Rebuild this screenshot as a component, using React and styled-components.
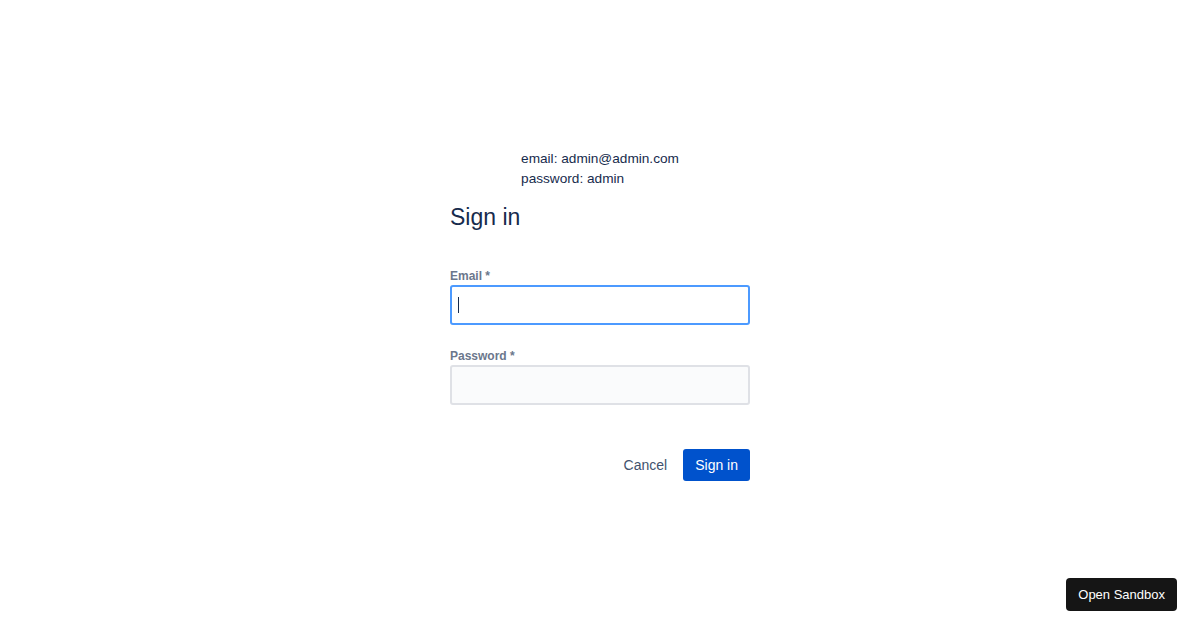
import React from 'react';
import styled, { createGlobalStyle } from 'styled-components';

const GlobalStyle = createGlobalStyle`
    html, body {
        margin: 0;
        padding: 0;
        background: #ffffff;
        font-family: "Liberation Sans", Arial, sans-serif;
        color: #172B4D;
    }
`;

const Page = styled.div`
    min-height: 630px;
    display: flex;
    flex-direction: column;
    align-items: center;
    padding-top: 149px;
    box-sizing: border-box;
`;

const Hint = styled.div`
    font-size: 13.65px;
    line-height: 20px;
    color: #172B4D;
    text-align: left;
`;

const Form = styled.form`
    width: 300px;
    display: flex;
    flex-direction: column;
`;

const Heading = styled.h1`
    margin: 14px 0 0;
    font-size: 23px;
    line-height: 28px;
    font-weight: 400;
    color: #172B4D;
`;

const Field = styled.div`
    display: flex;
    flex-direction: column;
    margin-top: ${(p) => p.$top}px;
`;

const Label = styled.label`
    font-size: 12px;
    line-height: 16px;
    font-weight: 700;
    color: #6B778C;
    margin-bottom: 1px;
`;

const InputBox = styled.div`
    height: 40px;
    box-sizing: border-box;
    border: 2px solid ${(p) => (p.$focused ? '#4C9AFF' : '#DFE1E6')};
    background: ${(p) => (p.$focused ? '#FFFFFF' : '#FAFBFC')};
    border-radius: 3px;
    display: flex;
    align-items: center;
    padding: 0 6px;
`;

const Caret = styled.span`
    width: 1px;
    height: 16px;
    background: #172B4D;
`;

const Input = styled.input`
    flex: 1;
    border: none;
    outline: none;
    background: transparent;
    font-family: inherit;
    font-size: 14px;
    color: #172B4D;
    padding: 0;
    min-width: 0;
`;

const Actions = styled.div`
    display: flex;
    justify-content: flex-end;
    gap: 4px;
    margin-top: 44px;
`;

const Button = styled.button`
    height: 32px;
    padding: 0 12px;
    border: none;
    border-radius: 3px;
    font-family: inherit;
    font-size: 14px;
    cursor: pointer;
    background: ${(p) => (p.$primary ? '#0052CC' : 'transparent')};
    color: ${(p) => (p.$primary ? '#FFFFFF' : '#42526E')};
`;

const SandboxButton = styled.button`
    position: fixed;
    right: 23px;
    bottom: 19px;
    height: 33px;
    padding: 0 12px;
    border: none;
    border-radius: 4px;
    background: #151515;
    color: #ffffff;
    font-family: "Liberation Sans", Arial, sans-serif;
    font-size: 13px;
`;

const TextField = ({ label, type, focused, top }) => (
    <Field $top={top}>
        <Label>{label} *</Label>
        <InputBox $focused={focused}>
            {focused && <Caret />}
            <Input type={type} />
        </InputBox>
    </Field>
);

export default function App() {
    return (
        <Page>
            <GlobalStyle />
            <Hint>
                email: admin@admin.com
                <br />
                password: admin
            </Hint>
            <Form onSubmit={(e) => e.preventDefault()}>
                <Heading>Sign in</Heading>
                <TextField label="Email" type="text" focused top={37} />
                <TextField label="Password" type="password" top={23} />
                <Actions>
                    <Button type="button">Cancel</Button>
                    <Button type="submit" $primary>Sign in</Button>
                </Actions>
            </Form>
            <SandboxButton>Open Sandbox</SandboxButton>
        </Page>
    );
}
